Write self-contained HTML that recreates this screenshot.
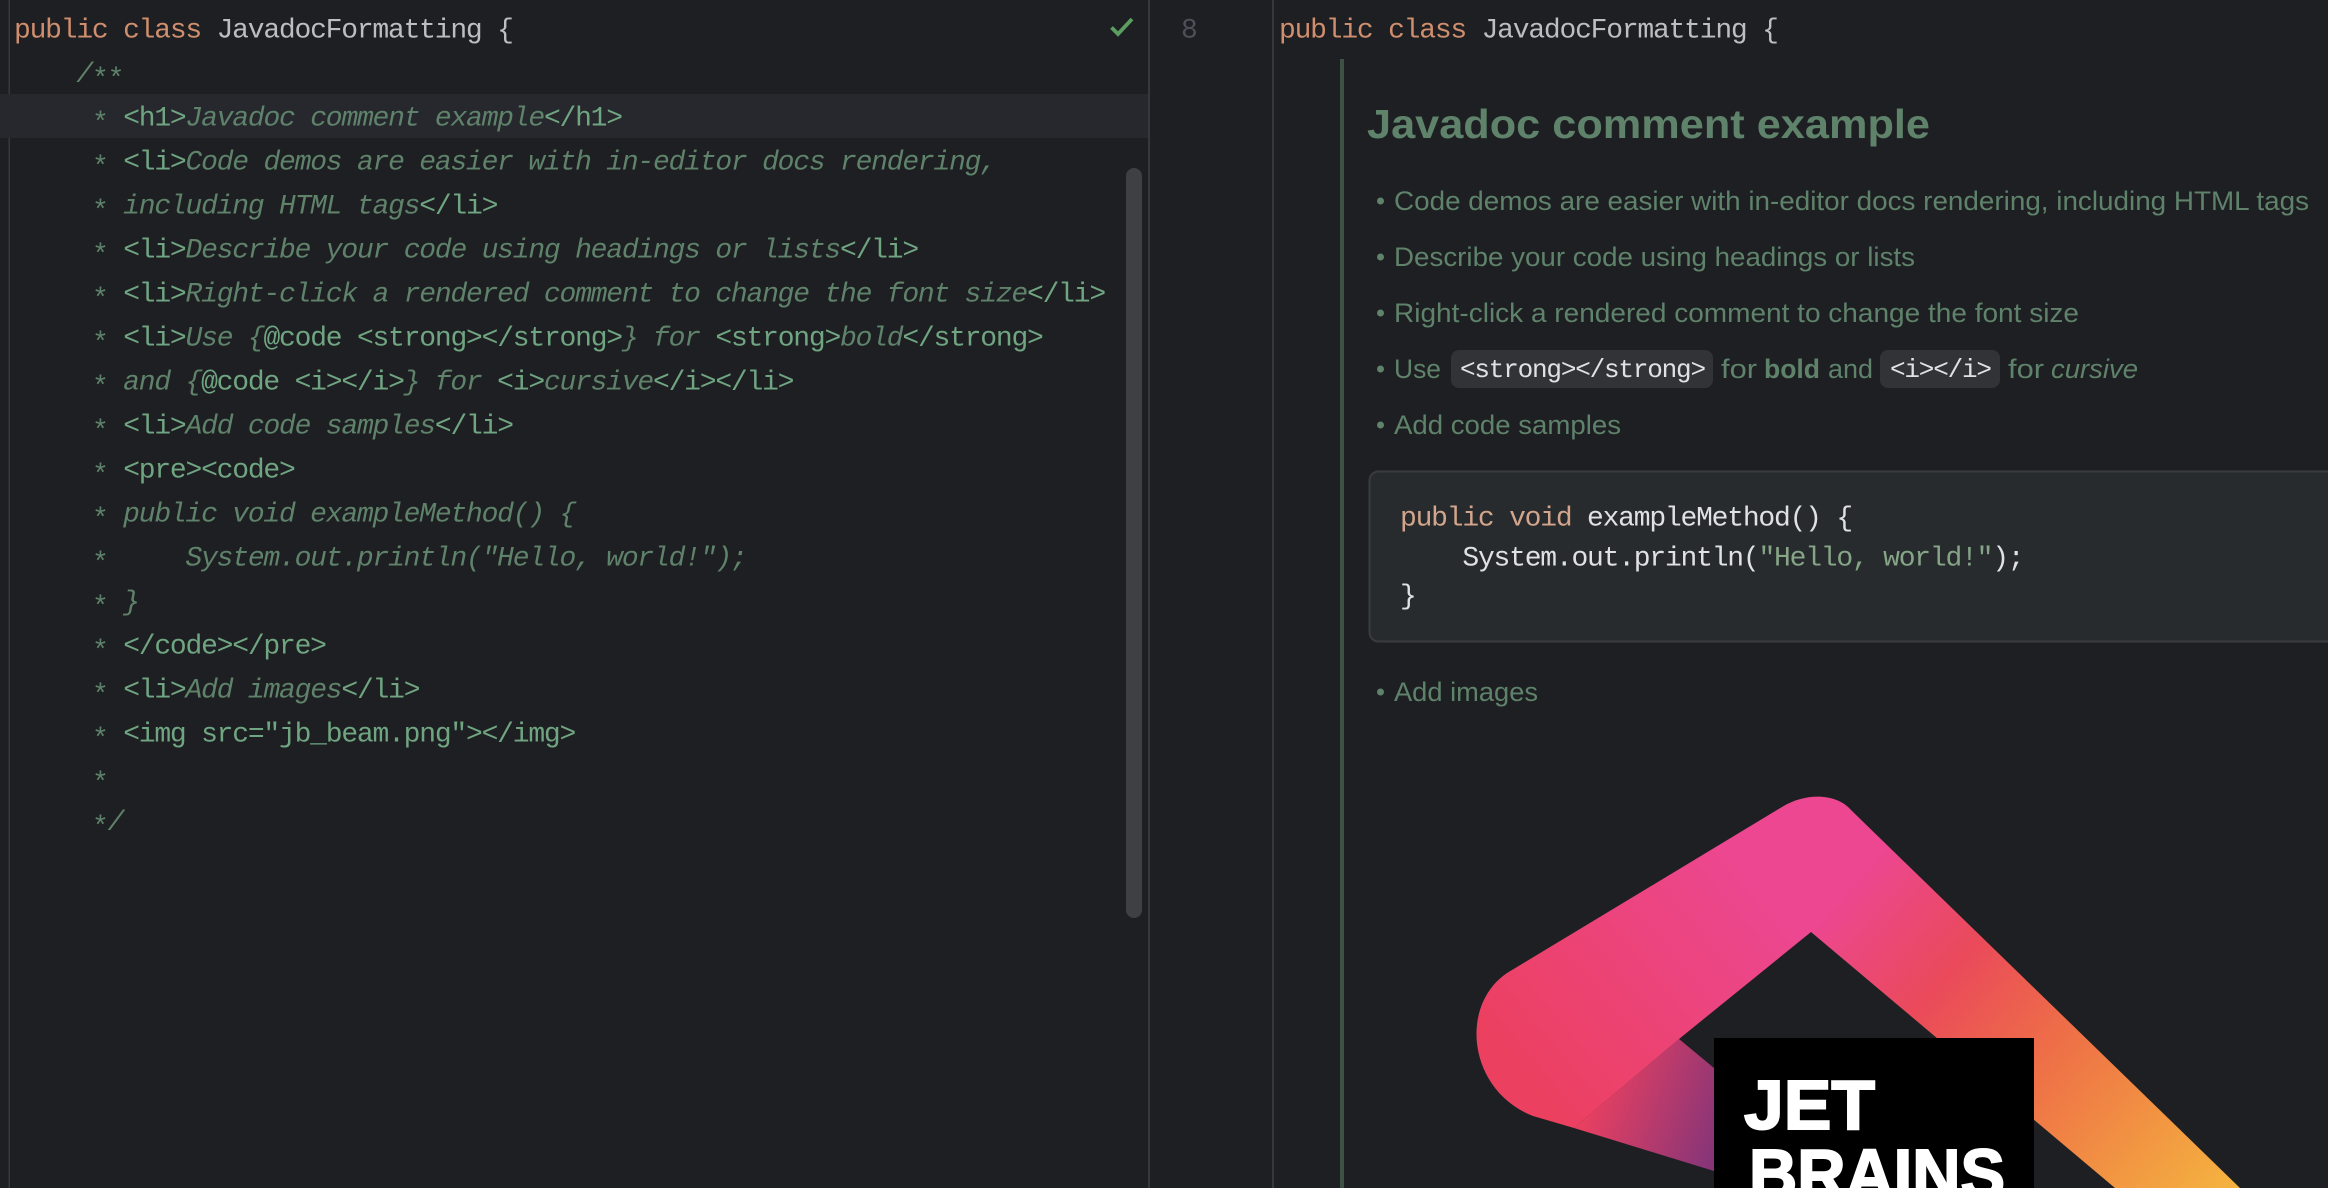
<!DOCTYPE html>
<html lang="en"><head><meta charset="utf-8"><title>JavadocFormatting</title>
<style>
html,body{margin:0;padding:0;background:#1e1f22;width:2328px;height:1188px;overflow:hidden}
svg{display:block;position:absolute;left:0;top:0}
text{white-space:pre}
.m{font-family:"Liberation Mono",monospace;font-size:28px;letter-spacing:-1.22px}
.c{fill:#5f826b;font-style:italic}
.st{font-style:normal;fill:#5f826b}
.t{font-style:normal;fill:#70a582}
.k{fill:#cf8e6d}
.w{fill:#bcbec4}
.p{font-family:"Liberation Sans",sans-serif;font-size:27px;fill:#5f826b}
.i{font-style:italic}
.pm{font-family:"Liberation Mono",monospace;font-size:26px;letter-spacing:-1.2px;fill:#dfe1e5}
</style></head>
<body>
<svg width="2328" height="1188" viewBox="0 0 2328 1188" xmlns="http://www.w3.org/2000/svg">
<defs>
<linearGradient id="lg" gradientUnits="userSpaceOnUse" x1="1540" y1="1100" x2="1830" y2="860"><stop offset="0" stop-color="#ec4060"/><stop offset=".8" stop-color="#ec4790"/><stop offset="1" stop-color="#ec4790"/></linearGradient>
<linearGradient id="rg" gradientUnits="userSpaceOnUse" x1="1843" y1="895" x2="2202" y2="1211"><stop offset="0" stop-color="#ec4790"/><stop offset=".275" stop-color="#ea4a5a"/><stop offset=".54" stop-color="#ee6f47"/><stop offset="1" stop-color="#f4b13f"/></linearGradient>
<linearGradient id="pg" gradientUnits="userSpaceOnUse" x1="1585" y1="1105" x2="1714" y2="1150"><stop offset="0" stop-color="#ea4060"/><stop offset="1" stop-color="#873578"/></linearGradient>
</defs>
<rect width="2328" height="1188" fill="#1e1f22"/>
<rect x="8.500" y="0" width="1.500" height="1188" fill="#36383c"/>
<rect x="0" y="94" width="1149" height="44" fill="#26282d"/>
<rect x="1148" y="0" width="2" height="1188" fill="#36383c"/>
<rect x="1272" y="0" width="2" height="1188" fill="#36383c"/>
<rect x="1126" y="168" width="16" height="750" rx="8" fill="#3f4043"/>
<path d="M1111.500 27.500 L1118 34 L1132 19" fill="none" stroke="#5c9e60" stroke-width="3.800"/>

<g class="m" transform="translate(0,-0.5)">
<text x="14" y="38"><tspan class="k">public class </tspan><tspan class="w">JavadocFormatting {</tspan></text>
<text x="76.400" y="82" class="c">/<tspan class="st" dy="5">**</tspan></text>
<text x="92" y="126" class="c"><tspan class="st" dy="5">*</tspan><tspan dy="-5"> </tspan><tspan class="t">&lt;h1&gt;</tspan>Javadoc comment example<tspan class="t">&lt;/h1&gt;</tspan></text>
<text x="92" y="170" class="c"><tspan class="st" dy="5">*</tspan><tspan dy="-5"> </tspan><tspan class="t">&lt;li&gt;</tspan>Code demos are easier with in-editor docs rendering,</text>
<text x="92" y="214" class="c"><tspan class="st" dy="5">*</tspan><tspan dy="-5"> including HTML tags</tspan><tspan class="t">&lt;/li&gt;</tspan></text>
<text x="92" y="258" class="c"><tspan class="st" dy="5">*</tspan><tspan dy="-5"> </tspan><tspan class="t">&lt;li&gt;</tspan>Describe your code using headings or lists<tspan class="t">&lt;/li&gt;</tspan></text>
<text x="92" y="302" class="c"><tspan class="st" dy="5">*</tspan><tspan dy="-5"> </tspan><tspan class="t">&lt;li&gt;</tspan>Right-click a rendered comment to change the font size<tspan class="t">&lt;/li&gt;</tspan></text>
<text x="92" y="346" class="c"><tspan class="st" dy="5">*</tspan><tspan dy="-5"> </tspan><tspan class="t">&lt;li&gt;</tspan>Use {<tspan class="t">@code &lt;strong&gt;&lt;/strong&gt;</tspan>} for <tspan class="t">&lt;strong&gt;</tspan>bold<tspan class="t">&lt;/strong&gt;</tspan></text>
<text x="92" y="390" class="c"><tspan class="st" dy="5">*</tspan><tspan dy="-5"> and {</tspan><tspan class="t">@code &lt;i&gt;&lt;/i&gt;</tspan>} for <tspan class="t">&lt;i&gt;</tspan>cursive<tspan class="t">&lt;/i&gt;&lt;/li&gt;</tspan></text>
<text x="92" y="434" class="c"><tspan class="st" dy="5">*</tspan><tspan dy="-5"> </tspan><tspan class="t">&lt;li&gt;</tspan>Add code samples<tspan class="t">&lt;/li&gt;</tspan></text>
<text x="92" y="478" class="c"><tspan class="st" dy="5">*</tspan><tspan dy="-5"> </tspan><tspan class="t">&lt;pre&gt;&lt;code&gt;</tspan></text>
<text x="92" y="522" class="c"><tspan class="st" dy="5">*</tspan><tspan dy="-5"> public void exampleMethod() {</tspan></text>
<text x="92" y="566" class="c"><tspan class="st" dy="5">*</tspan><tspan dy="-5">     System.out.println("Hello, world!");</tspan></text>
<text x="92" y="610" class="c"><tspan class="st" dy="5">*</tspan><tspan dy="-5"> }</tspan></text>
<text x="92" y="654" class="c"><tspan class="st" dy="5">*</tspan><tspan dy="-5"> </tspan><tspan class="t">&lt;/code&gt;&lt;/pre&gt;</tspan></text>
<text x="92" y="698" class="c"><tspan class="st" dy="5">*</tspan><tspan dy="-5"> </tspan><tspan class="t">&lt;li&gt;</tspan>Add images<tspan class="t">&lt;/li&gt;</tspan></text>
<text x="92" y="742" class="c"><tspan class="st" dy="5">*</tspan><tspan dy="-5"> </tspan><tspan class="t">&lt;img src="jb_beam.png"&gt;&lt;/img&gt;</tspan></text>
<text x="92" y="786" class="st" dy="5">*</text>
<text x="92" y="830" class="c"><tspan class="st" dy="5">*</tspan><tspan dy="-5">/</tspan></text>
<text x="1181" y="38" fill="#4b5059">8</text>
<text x="1279" y="38"><tspan class="k">public class </tspan><tspan class="w">JavadocFormatting {</tspan></text>
</g>

<rect x="1340" y="59" width="4" height="1129" fill="#3d5144"/>

<text x="1367" y="138" font-family="Liberation Sans, sans-serif" font-weight="bold" font-size="41" fill="#5f826b" textLength="563" lengthAdjust="spacingAndGlyphs">Javadoc comment example</text>

<g fill="#5f826b">
<circle cx="1380.500" cy="201" r="3.500"/><circle cx="1380.500" cy="257" r="3.500"/><circle cx="1380.500" cy="313" r="3.500"/><circle cx="1380.500" cy="369" r="3.500"/><circle cx="1380.500" cy="425" r="3.500"/><circle cx="1380.500" cy="692" r="3.500"/>
</g>
<text class="p" x="1394" y="210" textLength="915" lengthAdjust="spacingAndGlyphs">Code demos are easier with in-editor docs rendering, including HTML tags</text>
<text class="p" x="1394" y="266" textLength="521" lengthAdjust="spacingAndGlyphs">Describe your code using headings or lists</text>
<text class="p" x="1394" y="322" textLength="685" lengthAdjust="spacingAndGlyphs">Right-click a rendered comment to change the font size</text>
<text class="p" x="1394" y="378" textLength="47" lengthAdjust="spacingAndGlyphs">Use</text>
<rect x="1451" y="350" width="262" height="38" rx="8" fill="#313337"/>
<text class="pm" x="1460" y="377">&lt;strong&gt;&lt;/strong&gt;</text>
<text class="p" x="1721" y="378" textLength="36" lengthAdjust="spacingAndGlyphs">for</text>
<text class="p" x="1764" y="378" font-weight="bold" textLength="56" lengthAdjust="spacingAndGlyphs">bold</text>
<text class="p" x="1828" y="378" textLength="45" lengthAdjust="spacingAndGlyphs">and</text>
<rect x="1880" y="350" width="120" height="38" rx="8" fill="#313337"/>
<text class="pm" x="1890" y="377">&lt;i&gt;&lt;/i&gt;</text>
<text class="p" x="2008" y="378" textLength="36" lengthAdjust="spacingAndGlyphs">for</text>
<text class="p i" x="2051" y="378" textLength="87" lengthAdjust="spacingAndGlyphs">cursive</text>
<text class="p" x="1394" y="434" textLength="227" lengthAdjust="spacingAndGlyphs">Add code samples</text>

<rect x="1369.500" y="471.500" width="1000" height="170" rx="9" fill="#272b2e" stroke="#393b40" stroke-width="2"/>
<g class="m" transform="translate(0,-0.5)">
<text x="1400" y="526"><tspan fill="#d3a58c">public void </tspan><tspan fill="#dfe1e5">exampleMethod() {</tspan></text>
<text x="1462.400" y="566"><tspan fill="#dfe1e5">System.out.println(</tspan><tspan fill="#86a587">"Hello, world!"</tspan><tspan fill="#dfe1e5">);</tspan></text>
<text x="1400" y="604" fill="#dfe1e5">}</text>
</g>

<text class="p" x="1394" y="701" textLength="144" lengthAdjust="spacingAndGlyphs">Add images</text>

<!-- logo -->
<path d="M1679 1039 L1714 1068 L1714 1171 L1574 1128 Z" fill="url(#pg)"/>
<path d="M1782 807 C1806 792 1837 793.500 1851 810 L1880 838.200 L1835 945 L1811 932 L1679 1039 L1574 1128 L1533 1116 C1466 1090 1458 1000 1512 970 Z" fill="url(#lg)"/>
<path d="M1851 810 L2240 1188 L2115 1188 L1811 932 L1880 838.200 Z" fill="url(#rg)"/>
<rect x="1714" y="1038" width="320" height="150" fill="#000"/>
<text x="1744" y="1129" font-family="Liberation Sans, sans-serif" font-weight="bold" font-size="70" fill="#fff" stroke="#fff" stroke-width="2" textLength="131" lengthAdjust="spacingAndGlyphs">JET</text>
<text x="1749" y="1198" font-family="Liberation Sans, sans-serif" font-weight="bold" font-size="70" fill="#fff" stroke="#fff" stroke-width="2" textLength="256" lengthAdjust="spacingAndGlyphs">BRAINS</text>
</svg>
</body></html>
